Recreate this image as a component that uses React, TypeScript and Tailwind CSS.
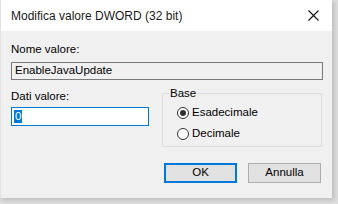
export default function App() {
  return (
    <div className="w-[338px] h-[204px] bg-[#dcdcdc] overflow-hidden font-['Liberation_Sans',sans-serif] text-[11.5px] text-black">
      <div className="w-[332px] h-[198px] bg-[#f0f0f0] border-l border-[#e2e2e2] flex flex-col shadow-[2px_2px_4px_rgba(0,0,0,0.15)]">
        {/* Title bar */}
        <div className="h-[31px] bg-white flex items-center justify-between pl-[10px] pr-[12px]">
          <span className="text-[12px] text-[#1a1a1a]">Modifica valore DWORD (32 bit)</span>
          <svg width="11" height="11" viewBox="0 0 11 11" className="mr-[1px]">
            <path d="M0.5 0.5 L10.5 10.5 M10.5 0.5 L0.5 10.5" stroke="#111" strokeWidth="1.1" />
          </svg>
        </div>

        {/* Body */}
        <div className="flex-1 flex flex-col px-[10px] pt-[11px]">
          <div className="leading-[14px]">Nome valore:</div>
          <div className="mt-[6px] h-[18px] w-[312px] border border-[#7a7a7a] bg-[#f0f0f0] flex items-center pl-[3px] leading-none">
            EnableJavaUpdate
          </div>

          <div className="flex mt-[8px]">
            <div className="flex flex-col w-[151px]">
              <div className="leading-[14px] mt-[1px]">Dati valore:</div>
              <div className="mt-[4px] h-[19px] w-[138px] border border-[#0078d7] bg-white flex items-center pl-[2px]">
                <span className="bg-[#0078d7] text-white leading-[13px] px-[1px]">0</span>
              </div>
            </div>

            <div className="relative mt-[5px] w-[160px] h-[54px] border border-[#dcdcdc] rounded-[2px]">
              <span className="absolute -top-[8px] left-[6px] bg-[#f0f0f0] px-[1px] leading-[14px]">Base</span>
              <div className="flex flex-col pl-[14px] pt-[12px] gap-[8px]">
                <div className="flex items-center gap-[3px]">
                  <span className="w-[12px] h-[12px] rounded-full border border-[#333] bg-white flex items-center justify-center">
                    <span className="w-[6px] h-[6px] rounded-full bg-[#333]" />
                  </span>
                  <span className="leading-[13px]">Esadecimale</span>
                </div>
                <div className="flex items-center gap-[3px]">
                  <span className="w-[12px] h-[12px] rounded-full border border-[#333] bg-white" />
                  <span className="leading-[13px]">Decimale</span>
                </div>
              </div>
            </div>
          </div>

          <div className="flex justify-end gap-[11px] mt-[16px] pr-[1px]">
            <button className="w-[73px] h-[20px] border-2 border-[#0078d7] bg-[#e1e1e1] flex items-center justify-center leading-none">
              OK
            </button>
            <button className="w-[73px] h-[20px] border border-[#adadad] bg-[#e1e1e1] flex items-center justify-center leading-none">
              Annulla
            </button>
          </div>
        </div>
      </div>
    </div>
  );
}
